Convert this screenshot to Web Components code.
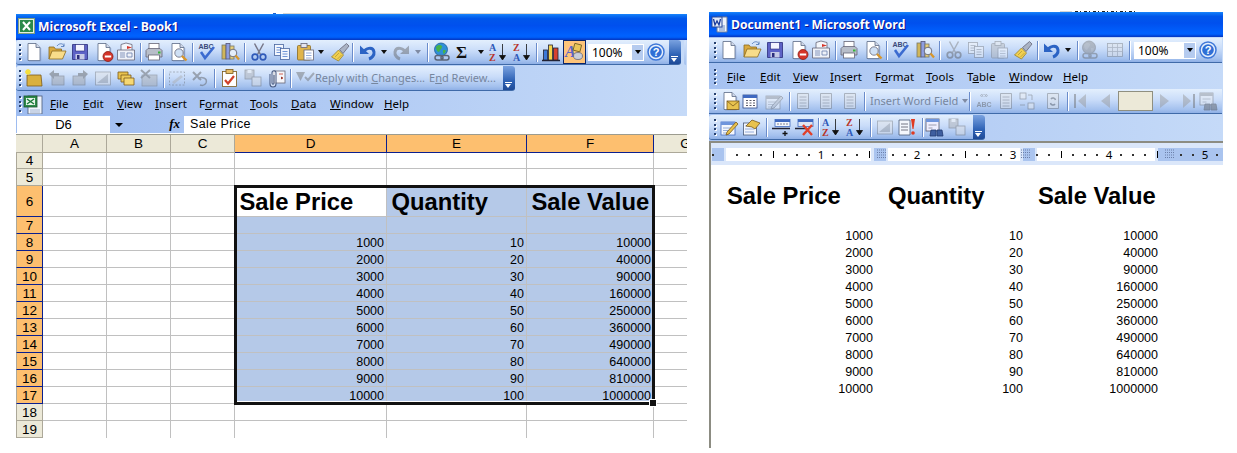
<!doctype html>
<html><head><meta charset="utf-8"><style>
html,body{margin:0;background:#fff}
body{width:1237px;height:453px;overflow:hidden;font-family:"Noto Sans","Liberation Sans",sans-serif}
#page{display:flex;align-items:flex-start;padding:11px 0 0 16px}
</style></head><body>
<div id="page">
<xl-window>
<xp-title slot="title" app="x">Microsoft Excel - Book1</xp-title>
<xp-band slot="bars" h="26"><xp-toolbar x="17" w="665">
<x-i n=grip c=21></x-i><x-i n=new c=35></x-i><x-i n=open c=58></x-i><x-i n=save c=81></x-i><x-i n=perm c=105></x-i><x-i n=mail c=127></x-i><x-i n=sep c=142></x-i><x-i n=print c=155></x-i><x-i n=preview c=179></x-i><x-i n=sep c=194></x-i><x-i n=spell c=208></x-i><x-i n=research c=231></x-i><x-i n=sep c=246></x-i><x-i n=cut c=260></x-i><x-i n=copy c=283></x-i><x-i n=paste c=306></x-i><x-i n=dd c=322></x-i><x-i n=brush c=341></x-i><x-i n=sep c=354></x-i><x-i n=undo c=369></x-i><x-i n=dd c=385></x-i><x-i n=redo c=402 dis></x-i><x-i n=dd c=419 dis></x-i><x-i n=sep c=429></x-i><x-i n=link c=443></x-i><x-i n=sigma c=465></x-i><x-i n=dd c=482></x-i><x-i n=az c=499></x-i><x-i n=za c=523></x-i><x-i n=sep c=538></x-i><x-i n=chart c=552></x-i><x-i n=draw c=575 on></x-i><x-combo c=617 w=56>100%</x-combo><x-i n=help c=657></x-i>
</xp-toolbar><x-tip></x-tip></xp-band>
<xp-band slot="bars" h="26"><xp-toolbar x="17" w="499">
<x-i n=grip c=21></x-i><x-i n=newfolder c=35></x-i><x-i n=back c=58 dis></x-i><x-i n=fwd c=81 dis></x-i><x-i n=fold c=104 dis></x-i><x-i n=folders c=127></x-i><x-i n=delfold c=150 dis></x-i><x-i n=sep c=165></x-i><x-i n=dash c=178 dis></x-i><x-i n=undo2 c=201 dis></x-i><x-i n=sep c=216></x-i><x-i n=check c=231></x-i><x-i n=pages c=254 dis></x-i><x-i n=clip c=277></x-i><x-i n=sep c=292></x-i><x-i n=reply c=306 dis></x-i><x-lab c=369.5 w=107><span>Reply with <u>C</u>hanges...</span></x-lab><x-lab c=463.5 w=67><span>E<u>n</u>d Review...</span></x-lab>
</xp-toolbar></xp-band>
<xp-band slot="bars" h="24"><xp-menu x="17"><x-i n=grip c=21></x-i><x-i n=xdoc c=34></x-i>
<x-lab c=67 w=32 tx><span><u>F</u>ile</span></x-lab><x-lab c=101 w=34 tx><span><u>E</u>dit</span></x-lab><x-lab c=137 w=38 tx><span><u>V</u>iew</span></x-lab><x-lab c=178 w=44 tx><span><u>I</u>nsert</span></x-lab><x-lab c=225.5 w=51 tx><span>F<u>o</u>rmat</span></x-lab><x-lab c=271.5 w=41 tx><span><u>T</u>ools</span></x-lab><x-lab c=311.5 w=39 tx><span><u>D</u>ata</span></x-lab><x-lab c=358 w=54 tx><span><u>W</u>indow</span></x-lab><x-lab c=400 w=30 tx><span><u>H</u>elp</span></x-lab>
</xp-menu></xp-band>
<xl-formula slot="formula" ref="D6">Sale Price</xl-formula>
<xl-grid slot="grid"></xl-grid>
</xl-window>
<wd-window>
<xp-title slot="title" app="w">Document1 - Microsoft Word</xp-title>
<xp-band slot="bars" h="26"><xp-toolbar x="710" w="513" noend>
<x-i n=grip c=716></x-i><x-i n=new c=730></x-i><x-i n=open c=753></x-i><x-i n=save c=776></x-i><x-i n=perm c=800></x-i><x-i n=mail c=822></x-i><x-i n=sep c=837></x-i><x-i n=print c=850></x-i><x-i n=preview c=874></x-i><x-i n=sep c=888></x-i><x-i n=spell c=902></x-i><x-i n=research c=926></x-i><x-i n=sep c=941></x-i><x-i n=cut c=955 dis></x-i><x-i n=copy c=977 dis></x-i><x-i n=paste c=1000 dis></x-i><x-i n=brush c=1024></x-i><x-i n=sep c=1039></x-i><x-i n=undo c=1053></x-i><x-i n=dd c=1069></x-i><x-i n=sep c=1079></x-i><x-i n=link c=1091 dis></x-i><x-i n=table c=1116 dis></x-i><x-i n=sep c=1131></x-i><x-combo c=1166 w=62>100%</x-combo><x-i n=help c=1209></x-i>
</xp-toolbar></xp-band>
<xp-band slot="bars" h="25"><xp-menu x="710" plain><x-i n=grip c=716></x-i>
<x-lab c=744 w=32 tx><span><u>F</u>ile</span></x-lab><x-lab c=778 w=34 tx><span><u>E</u>dit</span></x-lab><x-lab c=812.5 w=37 tx><span><u>V</u>iew</span></x-lab><x-lab c=853.5 w=45 tx><span><u>I</u>nsert</span></x-lab><x-lab c=901.5 w=51 tx><span>F<u>o</u>rmat</span></x-lab><x-lab c=947.5 w=41 tx><span><u>T</u>ools</span></x-lab><x-lab c=989 w=42 tx><span>T<u>a</u>ble</span></x-lab><x-lab c=1037 w=54 tx><span><u>W</u>indow</span></x-lab><x-lab c=1079 w=30 tx><span><u>H</u>elp</span></x-lab>
</xp-menu></xp-band>
<xp-band slot="bars" h="26"><xp-toolbar x="710" w="513" noend>
<x-i n=grip c=716></x-i><x-i n=mailpage c=731></x-i><x-i n=calendar c=751></x-i><x-i n=editdoc c=775 dis></x-i><x-i n=sep c=791></x-i><x-i n=doc c=804 dis></x-i><x-i n=doc c=827 dis></x-i><x-i n=doc c=851 dis></x-i><x-i n=sep c=866></x-i><x-lab c=915.5 w=89><span>Insert Word Field</span></x-lab><x-i n=dd c=966 dis></x-i><x-i n=sep c=971></x-i><x-i n=abc c=985 dis></x-i><x-i n=doc c=1007 dis></x-i><x-i n=merge c=1028 dis></x-i><x-i n=docq c=1054 dis></x-i><x-i n=sep c=1069></x-i><x-i n=first c=1081 dis></x-i><x-i n=prev c=1106 dis></x-i><x-box c=1136 w=35></x-box><x-i n=next c=1166 dis></x-i><x-i n=last c=1190 dis></x-i><x-i n=binoc c=1209 dis></x-i>
</xp-toolbar></xp-band>
<xp-band slot="bars" h="26"><xp-toolbar x="710" w="276">
<x-i n=grip c=716></x-i><x-i n=editdoc c=730></x-i><x-i n=hand c=752></x-i><x-i n=sep c=768></x-i><x-i n=addrow c=782></x-i><x-i n=delrow c=805></x-i><x-i n=sep c=820></x-i><x-i n=az c=832></x-i><x-i n=za c=856></x-i><x-i n=sep c=872></x-i><x-i n=fold c=886 dis></x-i><x-i n=docbang c=907></x-i><x-i n=sep c=924></x-i><x-i n=binoc c=935></x-i><x-i n=pages c=958 dis></x-i>
</xp-toolbar></xp-band>
<wd-ruler slot="ruler"></wd-ruler>
<wd-table slot="doc"></wd-table>
</wd-window>
</div>
<script>
const PAGE=(o='#5a6a85')=>`<path d="M4 1.500h8l4 4v13H4z" fill="#fff" stroke="${o}"/><path d="M12 1.500v4h4" fill="#cfd6e6" stroke="${o}"/><path d="M16.700 6v13H5" fill="none" stroke="#7f95bd" stroke-width=".7"/>`;
const SMALLPAGE=(x,y,w,h)=>`<rect x="${x}" y="${y}" width="${w}" height="${h}" fill="#f4f7fd" stroke="#4a66a0"/><path d="M${x+2} ${y+3}h${w-4}M${x+2} ${y+5.500}h${w-4}M${x+2} ${y+8}h${w-4}" stroke="#4f7ccc"/>`;
const SORT=(a,b,ca,cb)=>`<text x="1" y="9" font-family="Liberation Serif" font-weight="700" font-size="10" fill="${ca}">${a}</text><text x="1" y="19" font-family="Liberation Serif" font-weight="700" font-size="10" fill="${cb}">${b}</text><path d="M14.500 2v15M11.500 13.500l3 4.500 3-4.500z" stroke="#111" fill="#111"/>`;
const ICONS={
new:PAGE(),
open:'<path d="M2 17V5h5l1.500 2h6v3" fill="#d9a93f" stroke="#8a6a20"/><path d="M2 17l3-8h14l-3.500 8z" fill="#f8dc8a" stroke="#8a6a20"/><path d="M10 4c2-3 6-3 7 0M17 1.500V4.500h-3" fill="none" stroke="#4a73b8"/>',
save:'<path d="M2.500 2.500h15v15h-15z" fill="#5d62c6" stroke="#2b2d7c"/><rect x="5.500" y="2.500" width="9" height="6.500" fill="#f4f4ff" stroke="#2b2d7c" stroke-width=".6"/><rect x="5.500" y="12" width="9" height="5.500" fill="#c6cae6"/><rect x="7" y="13" width="2.500" height="4" fill="#2b2d7c"/>',
perm:PAGE()+'<circle cx="14" cy="14.500" r="5" fill="#d5352a" stroke="#8c1c12"/><rect x="10.800" y="13.500" width="6.400" height="2" fill="#fff"/>',
mail:'<path d="M5 8V2.500L10 1l6 1.500V8" fill="#f4f6fb" stroke="#667"/><path d="M11 4l5 1.500-5 1.500z" fill="#d5352a"/><path d="M1.500 8h17v10h-17z" fill="#eef1f8" stroke="#667"/><path d="M4 11h5M4 13h5M4 15h5M11 11h5v4h-5z" stroke="#6b80ad" fill="none"/>',
print:'<rect x="5" y="1.500" width="10" height="6" fill="#fff" stroke="#667"/><path d="M2 8.500l2-2h12l2 2v6.500H2z" fill="#b8bec9" stroke="#667"/><rect x="4.500" y="13" width="11" height="5" fill="#fff" stroke="#667"/><rect x="14" y="9.500" width="2.500" height="2" fill="#35b53a"/>',
preview:PAGE()+'<circle cx="11" cy="11" r="4.200" fill="#cfe0f5" stroke="#667"/><path d="M14 14l4.500 4.500" stroke="#d8962a" stroke-width="2.400"/>',
spell:'<text x="1.500" y="7" font-family="Liberation Sans" font-weight="700" font-size="7" fill="#3a4a7a">ABC</text><path d="M4 10l4 6L17 5" fill="none" stroke="#3b6bd0" stroke-width="2.600"/>',
research:'<rect x="2" y="3" width="4" height="14" fill="#d0b65a" stroke="#776"/><rect x="6" y="1.500" width="4" height="15.500" fill="#8e9ee0" stroke="#557"/><rect x="10" y="4" width="4" height="13" fill="#e8d07c" stroke="#776"/><circle cx="13" cy="11" r="3.800" fill="#e4eefa" stroke="#556"/><path d="M15.500 13.500l3.500 4" stroke="#d8962a" stroke-width="2.300"/>',
cut:'<path d="M5.500 1.500l6 11M14.500 1.500l-6 11" stroke="#778" stroke-width="1.500"/><circle cx="6" cy="15" r="2.800" fill="none" stroke="#2f59b8" stroke-width="1.700"/><circle cx="14" cy="15" r="2.800" fill="none" stroke="#2f59b8" stroke-width="1.700"/>',
copy:SMALLPAGE(2.500,2.500,9,11)+SMALLPAGE(8.500,6.500,9,11),
paste:'<rect x="2.500" y="3.500" width="13" height="14.500" rx="1" fill="#e0b44a" stroke="#8a6a20"/><rect x="6" y="1.500" width="6" height="4" fill="#e6e6ef" stroke="#667"/><rect x="9" y="8" width="9.500" height="10" fill="#fff" stroke="#667"/><path d="M11 11h5.500M11 13.500h5.500M11 16h5.500" stroke="#7e9bd0"/>',
brush:'<path d="M1.500 15l7-7 5 5-5 6z" fill="#f0cf50" stroke="#9b832a"/><path d="M5 15l4-4M7.500 17l4-4" stroke="#b89c3a"/><path d="M9.500 7.500l7-6 2.500 2.500-6 7.500z" fill="#aab3c5" stroke="#667"/>',
undo:'<path d="M5.500 11c1-5 9.500-7 10.500-1 .5 3-2 6-5 7" fill="none" stroke="#2b63c4" stroke-width="3"/><path d="M2 3.500v8.500h9z" fill="#2b63c4" />',
redo:'<path d="M14.500 11c-1-5-9.500-7-10.500-1-.5 3 2 6 5 7" fill="none" stroke="#2b63c4" stroke-width="3"/><path d="M18 3.500v8.500H9z" fill="#2b63c4"/>',
link:'<circle cx="9" cy="7.500" r="6.500" fill="#2f8fd8" stroke="#1a5c99"/><path d="M4 5c2-3 5-2 6-1s-2 4-3 6c-2 0-3-3-3-5zM11 8c2 0 3 0 3 1l-2 3c-1 0-1-3-1-4z" fill="#46b24a"/><rect x="3" y="13.500" width="8" height="4.500" rx="2.200" fill="none" stroke="#5a6478" stroke-width="1.500"/><rect x="9" y="13.500" width="8" height="4.500" rx="2.200" fill="none" stroke="#5a6478" stroke-width="1.500"/>',
sigma:'<text x="2" y="16" font-family="Liberation Serif" font-weight="700" font-size="17" fill="#111">Σ</text>',
az:SORT('A','Z','#2f59b8','#b8342a'),
za:SORT('Z','A','#b8342a','#2f59b8'),
chart:'<path d="M1 18.500h18" stroke="#223" stroke-width="1.400"/><rect x="2.500" y="8" width="4" height="10" fill="#3d78d8" stroke="#223"/><rect x="7.500" y="3" width="4" height="15" fill="#f5d24a" stroke="#223"/><rect x="12.500" y="6" width="4.500" height="12" fill="#d6402f" stroke="#223"/>',
draw:'<text x="1" y="15" font-family="Liberation Serif" font-style="italic" font-weight="700" font-size="16" fill="#5a63c6">A</text><rect x="10" y="2" width="7" height="7" fill="#e9c658" stroke="#6a5a20" transform="rotate(15 13 5)"/><ellipse cx="14" cy="14" rx="4.500" ry="3.500" fill="#c8cdd8" stroke="#667"/>',
help:'<circle cx="10" cy="10" r="8" fill="#e6effc" stroke="#3f78d8" stroke-width="1.500"/><circle cx="10" cy="10" r="5.800" fill="#2f6fd6"/><text x="10" y="14" text-anchor="middle" font-family="Liberation Sans" font-weight="700" font-size="11" fill="#fff">?</text>',
newfolder:'<path d="M3 7h14l1 11H3z" fill="#d9b03e" stroke="#7b5a1c"/><path d="M1 4h6M4 1v6M2 2l4 4M6 2L2 6" stroke="#f5df3c" stroke-width="1.400"/>',
back:'<rect x="5" y="8" width="12" height="9" fill="#8aa" stroke="#557"/><path d="M2 6l5-4v3h5v3H7v3z" fill="#557"/>',
fwd:'<rect x="3" y="8" width="12" height="9" fill="#8aa" stroke="#557"/><path d="M18 6l-5-4v3H8v3h5v3z" fill="#557"/>',
fold:'<rect x="2.500" y="4" width="15" height="13" fill="#dfe5f0" stroke="#667"/><path d="M4 15L15 6v9z" fill="#99a" />',
folders:'<path d="M2 4h10v7H2z" fill="#e8c24e" stroke="#7b5a1c"/><path d="M5 7h10v7H5z" fill="#eecb5a" stroke="#7b5a1c"/><path d="M8 10h10v7H8z" fill="#f6d873" stroke="#7b5a1c"/>',
delfold:'<rect x="3" y="7" width="15" height="11" fill="#aab" stroke="#667"/><path d="M2 2l9 8M11 2l-9 8" stroke="#556" stroke-width="2"/>',
dash:'<rect x="2.500" y="4" width="15" height="13" fill="none" stroke="#556" stroke-dasharray="2 1.500"/><path d="M5 14l9-7 2 2-9 7z" fill="#aab"/>',
undo2:'<path d="M3 4l8 8M11 4l-8 8" stroke="#556" stroke-width="2"/><path d="M8 11c3-3 10-1 8 4-1 2-3 3-6 2" fill="none" stroke="#556" stroke-width="1.500"/>',
check:'<rect x="2.500" y="3.500" width="14" height="15" fill="#fff" stroke="#7b5a1c"/><rect x="6" y="1.500" width="7" height="4" fill="#e7bf6a" stroke="#7b5a1c"/><path d="M5 12l3 3.500L14 8" fill="none" stroke="#d0402a" stroke-width="2.200"/>',
pages:'<rect x="2" y="2" width="9" height="9" fill="#aab" stroke="#556"/><rect x="4.500" y="2" width="4" height="3" fill="#eef"/><rect x="9" y="9" width="9" height="9" fill="#dde" stroke="#556"/>',
clip:'<rect x="8" y="3" width="11" height="12" fill="#f4f6fb" stroke="#667"/><path d="M13 6h4M15 9l2 1-2 1" stroke="#c8402a"/><path d="M4 6v10c0 4 6 4 6 0V5c0-3-4-3-4 0v10c0 1.500 2 1.500 2 0V7" fill="#fff8" stroke="#4d5f86" stroke-width="1.100"/>',
reply:'<path d="M1 4h9L5.500 13z" fill="#667"/><path d="M10 9l3 3 6-7" fill="none" stroke="#667" stroke-width="2"/>',
xdoc:'<rect x="5" y="2" width="14" height="18" fill="#eef3fb" stroke="#4a5a78"/><path d="M7 16h10M7 18h10" stroke="#8fa3c8"/><rect x="1" y="2" width="13" height="11" fill="#2e8b4a" stroke="#17552b"/><rect x="3" y="4" width="9" height="7" fill="#e8f4ea"/><path d="M4 5l7 5M11 5l-7 5" stroke="#1a7a3a" stroke-width="1.500"/>',
mailpage:PAGE()+'<rect x="7" y="10" width="12" height="8.500" fill="#e8c24e" stroke="#7b5a1c"/><path d="M7 10l6 5 6-5" fill="none" stroke="#7b5a1c"/>',
calendar:'<rect x="3" y="4" width="14" height="13" fill="#fff" stroke="#2f4a88"/><rect x="3" y="4" width="14" height="3" fill="#3f69c0"/><path d="M6 9.500h2M9.500 9.500h2M13 9.500h2M6 12h2M9.500 12h2M13 12h2M6 14.500h2M9.500 14.500h2M13 14.500h2" stroke="#334"/>',
editdoc:'<rect x="2" y="5" width="14" height="13" fill="#f4f7fd" stroke="#3f69c0"/><rect x="2" y="5" width="14" height="3" fill="#6f95dc"/><path d="M4 11h8M4 13.500h6M4 16h6" stroke="#7e9bd0"/><path d="M8 15l9-10 2 2-9 10-3 1z" fill="#e8c24e" stroke="#7b5a1c"/>',
doc:'<path d="M4.500 2.500h11v15h-11z" fill="#dfe6f3" stroke="#556"/><path d="M6.500 6h7M6.500 9h7M6.500 12h7M6.500 15h7" stroke="#667"/>',
abc:'<text x="10" y="7" text-anchor="middle" font-family="Liberation Sans" font-size="7" fill="#556">«»</text><text x="10" y="16" text-anchor="middle" font-family="Liberation Sans" font-weight="700" font-size="7" fill="#556">ABC</text>',
merge:'<rect x="3" y="2" width="6" height="6" fill="#eef" stroke="#556"/><rect x="11" y="12" width="6" height="6" fill="#eef" stroke="#556"/><path d="M11 4h4v5M3 14h5" stroke="#556" fill="none"/>',
docq:'<path d="M4.500 2.500h11v15h-11z" fill="#dfe6f3" stroke="#556"/><path d="M8 8a2.500 2.500 0 0 1 4.500 1M12 13a2.500 2.500 0 0 1-4.500-1" fill="none" stroke="#456" stroke-width="1.500"/>',
first:'<rect x="4" y="3" width="2" height="14" fill="#667"/><path d="M16 3v14L8 10z" fill="#8a96a8"/>',
prev:'<path d="M15 3v14L6 10z" fill="#8a96a8"/>',
next:'<path d="M5 3v14l9-7z" fill="#8a96a8"/>',
last:'<rect x="14" y="3" width="2" height="14" fill="#667"/><path d="M4 3v14l8-7z" fill="#8a96a8"/>',
binoc:'<rect x="2" y="2" width="13" height="12" fill="#eef" stroke="#556"/><rect x="2" y="2" width="13" height="3" fill="#6f95dc"/><path d="M4.500 8h8M4.500 11h4" stroke="#889"/><path d="M7 13h5v6H6zM13 13h5l1 6h-6z" fill="#3f5f9f" stroke="#223a70"/>',
hand:'<rect x="2.500" y="6" width="13" height="12" fill="#f4f7fd" stroke="#4a5a78"/><path d="M4 9h9M4 12h9M4 15h9" stroke="#7e9bd0"/><path d="M5 9l6-6 8 3-5 6-3-2z" fill="#e8c24e" stroke="#7b5a1c"/>',
addrow:'<rect x="4" y="2.500" width="15" height="7" fill="#f4f7fd" stroke="#3f69c0"/><rect x="4" y="2.500" width="15" height="2.500" fill="#3f69c0"/><path d="M6 7h11" stroke="#667" stroke-dasharray="2 1"/><path d="M1 11.500h18" stroke="#223" stroke-width="1.500"/><path d="M14 14v5M11.500 16.500h5" stroke="#111" stroke-width="1.300"/>',
delrow:'<rect x="4" y="2.500" width="15" height="7" fill="#dfe6f3" stroke="#3f69c0"/><rect x="4" y="2.500" width="15" height="2.500" fill="#3f69c0"/><path d="M1 11.500h12" stroke="#223" stroke-width="1.500"/><path d="M9 8l9 10M18 8l-9 10" stroke="#e0402a" stroke-width="2.400"/>',
docbang:'<path d="M3 3h11v15H3z" fill="#f4f7fd" stroke="#4a5a78"/><path d="M5 7h7M5 10h7M5 13h7" stroke="#556"/><path d="M15 2h4l-1.500 10h-1z" fill="#e03a20"/><circle cx="17" cy="16" r="1.800" fill="#e03a20"/>',
table:'<rect x="2.500" y="3.500" width="15" height="13" fill="#dfe6f3" stroke="#667"/><path d="M2.500 7.500h15M2.500 11.500h15M7.500 3.500v13M12.500 3.500v13" stroke="#889"/>'
};
class XI extends HTMLElement{constructor(){super();
 const n=this.getAttribute('n'),dis=this.hasAttribute('dis'),on=this.hasAttribute('on');
 const s=this.attachShadow({mode:'open'});
 let st=':host{display:inline-flex;align-items:center;justify-content:center;flex:none}',b='';
 if(n==='grip'){st+=':host{width:3px;height:16px;flex-direction:column;justify-content:space-between}i{display:block;width:2px;height:2px;background:#27416f;box-shadow:1px 1px #fff}';b='<i></i><i></i><i></i><i></i>';}
 else if(n==='sep'){st+=':host{width:2px;height:19px;background:linear-gradient(90deg,#6a8ccb 50%,#fff 50%)}';}
 else if(n==='dd'){st+=`:host{width:7px;height:20px}i{display:block;border:3.500px solid transparent;border-top:4px solid ${dis?'#7f8ba3':'#111'};border-bottom:0}`;b='<i></i>';}
 else{st+=':host{width:20px;height:20px}svg{display:block;'+(dis?'filter:grayscale(1) opacity(.45)':'')+'}';
  if(on)st+=':host{width:23px;height:24px;background:#fdc47a;outline:1px solid #0a246a;outline-offset:-1px}';
  b=`<svg width="20" height="20" viewBox="0 0 20 20" stroke-width=".8">${ICONS[n]||''}</svg>`;}
 s.innerHTML=`<style>${st}</style>${b}`;
}}
class XLab extends HTMLElement{constructor(){super();
 const tx=this.hasAttribute('tx');
 this.attachShadow({mode:'open'}).innerHTML=`<style>:host{display:inline-block;flex:none;font:${tx?'11.500px':'11px'} "Noto Sans","Liberation Sans",sans-serif;color:${tx?'#000':'#76869e'};white-space:nowrap;line-height:20px;text-align:left}</style><slot></slot>`;
}}
class XCombo extends HTMLElement{constructor(){super();
 this.attachShadow({mode:'open'}).innerHTML=`<style>:host{display:inline-flex;flex:none;height:17px;background:#fff;font:12px "Noto Sans","Liberation Sans",sans-serif;color:#000;box-sizing:border-box;align-items:center;padding-left:3px;border:1px solid #fff;border-right:0}
 span{flex:1;line-height:15px}b{display:flex;align-items:center;justify-content:center;width:11px;height:15px;background:#b5cbef;border-right:1px solid #fff}i{border:3.500px solid transparent;border-top:4px solid #000;border-bottom:0}</style><span><slot></slot></span><b><i></i></b>`;
}}
class XBox extends HTMLElement{constructor(){super();
 this.attachShadow({mode:'open'}).innerHTML=`<style>:host{display:block;flex:none;height:20px;background:#ece9d8;border:1px solid #8f8f80;box-sizing:border-box}</style>`;
}}
class XTip extends HTMLElement{constructor(){super();
 this.attachShadow({mode:'open'}).innerHTML=`<style>:host{display:block;flex:none;width:2px;height:25px;margin-left:3px;border-radius:2px 0 0 2px;background:linear-gradient(#d5e4fb,#a4c1ee)}</style>`;
}}
function placeKids(host){
 let x=+host.getAttribute('x');
 for(const c of host.children){
  const n=c.getAttribute('n');
  const w=+(c.getAttribute('w')||{grip:3,sep:2,dd:7}[n]||(c.hasAttribute('on')?23:20));
  c.style.width=w+'px';
  c.style.marginLeft=(+c.getAttribute('c')-w/2-x)+'px';
  x=+c.getAttribute('c')+w/2;
 }
}
class XToolbar extends HTMLElement{constructor(){super();
 const w=this.getAttribute('w'),noend=this.hasAttribute('noend');
 this.attachShadow({mode:'open'}).innerHTML=`<style>:host{display:flex;flex:none;align-items:center;height:25px;width:${w}px;box-sizing:border-box;position:relative;border-radius:${noend?0:'3px'};background:linear-gradient(#e3effd,#c9dcf9 45%,#a4c1ee 85%,#8fb0e6);border-bottom:1px solid #3f6aa8;overflow:hidden}
 .end{margin-left:auto;width:12px;height:100%;flex:none;background:linear-gradient(#7aa2e0,#2f63b6 60%,#1e4a97);position:relative}
 .end i{position:absolute;left:2px;bottom:7px;width:7px;height:1px;background:#fff}.end b{position:absolute;left:2px;bottom:2px;border:3.500px solid transparent;border-top:4px solid #fff;border-bottom:0}</style><slot></slot>${noend?'':'<div class="end"><i></i><b></b></div>'}`;
 placeKids(this);
}}
class XMenu extends HTMLElement{constructor(){super();
 this.attachShadow({mode:'open'}).innerHTML=`<style>:host{display:flex;align-items:center;height:100%}</style><slot></slot>`;
 placeKids(this);
}}
class XBand extends HTMLElement{constructor(){super();
 this.attachShadow({mode:'open'}).innerHTML=`<style>:host{display:flex;height:${this.getAttribute('h')}px}</style><slot></slot>`;
}}
class XTitle extends HTMLElement{constructor(){super();
 const app=this.getAttribute('app');
 const ic=app==='x'?'<svg width="17" height="17" viewBox="0 0 17 17"><rect x=".5" y=".5" width="16" height="15" fill="#e6f0e0" stroke="#7f9f7f"/><rect x="2" y="2" width="13" height="12" fill="#2b8a4b"/><path d="M5 4l7 8M12 4l-7 8" stroke="#fff" stroke-width="2"/></svg>':'<svg width="17" height="17" viewBox="0 0 17 17"><path d="M6 1h10v15H6z" fill="#eef3fb" stroke="#6a7a9a"/><path d="M8 10h6M8 12h6M8 14h6" stroke="#6a8ac0"/><rect x="1" y="1" width="10" height="10" fill="#e6ecf8" stroke="#2a4a9a"/><path d="M2.500 3l1.500 6 2-4 2 4 1.500-6" fill="none" stroke="#1a3a9a" stroke-width="1.300"/></svg>';
 this.attachShadow({mode:'open'}).innerHTML=`<style>:host{display:flex;align-items:center;gap:3px;box-sizing:border-box;height:${app==='x'?26:25}px;padding:0 0 ${app==='x'?2:0}px 2px;background:linear-gradient(#1a86fb,#0a6ff4 7%,#0056ea 18%,#0050ee 45%,#0062ff 85%,#0058f0 92%,#003dd0 96%,#0a3cc0);color:#fff;font:700 12.200px "Open Sans","Noto Sans",sans-serif;text-shadow:1px 1px #0f1089;white-space:pre}</style>${ic}<slot></slot>`;
}}
class XlFormula extends HTMLElement{constructor(){super();
 this.attachShadow({mode:'open'}).innerHTML=`<style>:host{display:flex;height:17px;font:13px "Liberation Sans",sans-serif;color:#000;line-height:17px}
 .ref{width:93px;margin-left:1px;background:#fff;text-align:center}
 .arrow{width:26px;display:flex;align-items:center;justify-content:center;padding-right:8px;box-sizing:border-box}.arrow i{border:4px solid transparent;border-top:4px solid #000;border-bottom:0}
 .fx{width:48px;text-align:right;padding-right:4px;box-sizing:border-box;font:italic 700 13px "Liberation Serif",serif}
 .v{flex:1;background:#fff;padding-left:6px;letter-spacing:.4px;font-size:12.500px}</style><div class="ref">${this.getAttribute('ref')}</div><div class="arrow"><i></i></div><div class="fx">fx</div><div class="v"><slot></slot></div>`;
}}
class XlGrid extends HTMLElement{constructor(){super();
 const cols=[['',27],['A',64],['B',64],['C',64],['D',152],['E',140],['F',127],['G',64]];
 const rows=[[4,16],[5,17],[6,31],[7,17],[8,17],[9,17],[10,17],[11,17],[12,17],[13,17],[14,17],[15,17],[16,17],[17,17],[18,17],[19,17]];
 let h=`<div class="h corner"></div>`;
 cols.slice(1).forEach(([c])=>{h+=`<div class="h ${'DEF'.includes(c)?'sel':''}"><span>${c}</span></div>`});
 rows.forEach(([r])=>{
  const sel=r>=6&&r<=17;
  h+=`<div class="h rh ${sel?'sel':''}">${r}</div>`;
  ['A','B','C','D','E','F','G'].forEach(c=>{
   let t='',k='';
   if(sel&&'DEF'.includes(c)){
    k=(r===6&&c==='D')?'':'b';
    const n=r-7;
    if(r===6)t=`<span class="hd">${{D:'Sale Price',E:'Quantity',F:'Sale Value'}[c]}</span>`;
    else if(n>0)t={D:n*1000,E:n*10,F:n*n*10000}[c];
   }
   h+=`<div class="c ${k} ${r===19?'last':''}">${t}</div>`;
  });
 });
 this.attachShadow({mode:'open'}).innerHTML=`<style>:host{display:block;position:relative;width:671px;overflow:hidden;margin-top:1px;border-top:1px solid #9c9c8f;font:12.500px "Liberation Sans",sans-serif;color:#000}
 .g{display:grid;grid-template-columns:${cols.map(c=>c[1]+'px').join(' ')};grid-template-rows:18px ${rows.map(r=>r[1]+'px').join(' ')}}
 .h{background:#ece9d8;border-right:1px solid #aca899;border-bottom:1px solid #aca899;box-sizing:border-box;display:flex;align-items:center;justify-content:center;font-size:13.500px;line-height:1;overflow:hidden}
 .rh{border-left:1px solid #aca899;padding-top:1px}
 .sel{background:#fdbf6f;border-right-color:#0a1f8f;border-bottom-color:#0a1f8f}
 .c{border-right:1px solid #c0c0c0;border-bottom:1px solid #c0c0c0;box-sizing:border-box;text-align:right;padding:1px 2px 0 0;line-height:16px;overflow:hidden}
 .c.last{border-bottom:0}.b{background:#b5c9e8}
 .hd{display:block;text-align:left;padding-left:4.500px;font:700 23.800px/30px "Liberation Sans",sans-serif;white-space:nowrap}
 .selbox{position:absolute;left:218px;top:50px;width:421px;height:220px;border:3px solid #111;box-sizing:border-box;pointer-events:none;box-shadow:inset 0 -1px #fff}
 .selbox i{position:absolute;right:-5px;bottom:-5px;width:6px;height:6px;background:#111;border:1px solid #fff}</style><div class="g">${h}</div><div class="selbox"><i></i></div>`;
}}
class XlWindow extends HTMLElement{constructor(){super();
 this.attachShadow({mode:'open'}).innerHTML=`<style>:host{display:block;width:671px;flex:none;margin-top:2px}
 .strip{display:flex;height:1px}.strip i{display:block;height:1px}
 .bars{background:linear-gradient(90deg,#9ebcf0,#c5daf8)}</style><div class="strip"><i style="margin-left:257px;width:3px;background:#1a5fd0"></i><i style="margin-left:7px;width:317px;background:#d4d4d4"></i></div><slot name="title"></slot><div class="bars"><slot name="bars"></slot><slot name="formula"></slot></div><slot name="grid"></slot>`;
}}
class WdWindow extends HTMLElement{constructor(){super();
 this.attachShadow({mode:'open'}).innerHTML=`<style>:host{display:block;width:514px;flex:none;margin-left:22px}
 .strip{display:flex;height:1px}.strip i{display:block;height:1px}
 .bars{background:linear-gradient(90deg,#a6c2f1,#c5daf8);padding-top:1px}
 .doc{border-left:2px solid #8c8c82;height:307px;box-sizing:border-box}</style><div class="strip"><i style="margin-left:351px;width:12px;background:#d4d4d4"></i><i style="margin-left:3px;width:63px;background:repeating-linear-gradient(90deg,#222 0 3px,#fff 3px 5px,#222 5px 6px,#fff 6px 9px)"></i></div><slot name="title"></slot><div class="bars"><slot name="bars"></slot></div><div class="doc"><slot name="ruler"></slot><slot name="doc"></slot></div>`;
}}
class WdRuler extends HTMLElement{constructor(){super();
 const ticks={5:'|',13:'|',21:'|',29:'|',37:'|',9:'1',17:'2',25:'3',33:'4',41:'5'};
 let h='';
 for(let k=0;k<=42;k++){
  let t=[14,26,38].includes(k)?'<svg width="11" height="11" viewBox="0 0 11 11"><path d="M1 1h9M1 3.500h9M1 6h9M1 8.500h9" stroke="#6b7fa8" stroke-dasharray="1 1"/></svg>':(ticks[k]==='|'?'<i class="t"></i>':(ticks[k]||'<i class="d"></i>'));
  if(k===1)t='';
  h+=`<div>${t}</div>`;
 }
 const B='#aac4ef',G='#dbe7fa';
 this.attachShadow({mode:'open'}).innerHTML=`<style>:host{display:block;border-top:2px solid #8c8c82;background:${G};height:24px;box-sizing:border-box;padding:5px 0 6px 0;overflow:hidden}
 .r{height:13px;display:grid;grid-template-columns:repeat(43,12px);margin-left:-4px;font:11.500px/13px "Noto Sans",sans-serif;color:#000;
 background:linear-gradient(90deg,${G} 5px,${B} 5px 17px,${G} 17px 19px,#fff 19px 164px,${G} 164px 167px,${B} 167px 179px,${G} 179px 181px,#fff 181px 313px,${G} 313px 316px,${B} 316px 328px,${G} 328px 330px,#fff 330px 448px,${G} 448px 451px,${B} 451px)}
 .r div{display:flex;align-items:center;justify-content:center}.t{width:1px;height:7px;background:#000}.d{width:2px;height:2px;background:#333}</style><div class="r">${h}</div>`;
}}
class WdTable extends HTMLElement{constructor(){super();
 let h='<b>Sale Price</b><b>Quantity</b><b>Sale Value</b><div class="sp"></div>';
 for(let n=1;n<=10;n++)h+=`<div>${n*1000}</div><div>${n*10}</div><div>${n*n*10000}</div>`;
 this.attachShadow({mode:'open'}).innerHTML=`<style>:host{display:block;padding:16px 0 0 16px;font:12.500px/17px "Liberation Sans",sans-serif;color:#000}
 .t{display:grid;grid-template-columns:146px 135px 120px;column-gap:15px}
 b{font:700 23.800px/30px "Liberation Sans",sans-serif;white-space:nowrap;text-align:left}
 .sp{grid-column:1/4;height:17px}div{text-align:right}</style><div class="t">${h}</div>`;
}}
for(const [n,c] of Object.entries({'x-i':XI,'x-lab':XLab,'x-combo':XCombo,'x-box':XBox,'x-tip':XTip,'xp-toolbar':XToolbar,'xp-menu':XMenu,'xp-band':XBand,'xp-title':XTitle,'xl-formula':XlFormula,'xl-grid':XlGrid,'xl-window':XlWindow,'wd-window':WdWindow,'wd-ruler':WdRuler,'wd-table':WdTable}))customElements.define(n,c);
</script>
</body></html>
